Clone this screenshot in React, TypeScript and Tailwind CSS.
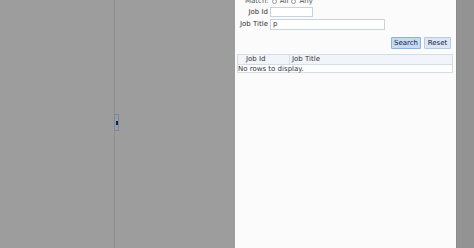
import React from 'react';

export default function App() {
  return (
    <div className="flex h-[248px] w-[474px] overflow-hidden bg-[#9d9d9d] text-[7px] text-[#333]" style={{ fontFamily: '"DejaVu Sans", "Liberation Sans", sans-serif' }}>
      {/* left masked area */}
      <div className="flex w-[115px] shrink-0 border-r border-[#8f8f8f]" />
      <div className="relative w-[120px] shrink-0">
        <div className="absolute -left-[1px] top-[114px] flex h-[17px] w-[5px] items-center justify-center border border-[#7d8896] bg-[#94a0ae]">
          <div className="h-[4px] w-[2px] bg-[#1c2330]" />
        </div>
      </div>

      {/* form panel */}
      <div className="flex w-[221px] shrink-0 flex-col bg-[#fbfbfb] pl-[2px] pr-[3px]">
        <div className="-mt-[3px] flex h-[8px] items-center gap-[3px] pl-[8px] text-[#555]">
          <span>Match:</span>
          <span className="h-[5px] w-[5px] rounded-full border border-[#999] bg-white" />
          <span>All</span>
          <span className="h-[5px] w-[5px] rounded-full border border-[#999] bg-white" />
          <span>Any</span>
        </div>
        <div className="mt-[2px] flex items-center">
          <span className="w-[33px] pr-[2px] text-right">Job Id</span>
          <div className="h-[10px] w-[43px] border border-[#c9d3de] bg-white" />
        </div>
        <div className="mt-[1px] flex items-center">
          <span className="w-[33px] pr-[2px] text-right">Job Title</span>
          <div className="flex h-[11px] w-[115px] items-center border border-[#c9d3de] bg-white pl-[2px]">p</div>
        </div>
        <div className="mt-[7px] flex justify-end gap-[3px] pr-[2px]">
          <button className="h-[12px] w-[30px] rounded-[1px] border border-[#8fb0d8] bg-[#c5daf3] text-[7px] text-[#224]">Search</button>
          <button className="h-[12px] w-[27px] rounded-[1px] border border-[#b8cbe2] bg-[#dbe7f5] text-[7px] text-[#224]">Reset</button>
        </div>
        <div className="mt-[5px] flex h-[19px] flex-col border border-[#d6dde6] bg-white">
          <div className="flex h-[10px] border-b border-[#d6dde6] bg-[#f1f5fb]">
            <div className="flex w-[52px] items-center border-r border-[#d6dde6] pl-[8px]">Job Id</div>
            <div className="flex items-center pl-[2px]">Job Title</div>
          </div>
          <div className="leading-[8px]">No rows to display.</div>
        </div>
      </div>

      {/* right masked strip */}
      <div className="flex-1 border-l border-[#8a8a8a] bg-[#939393]" />
    </div>
  );
}
